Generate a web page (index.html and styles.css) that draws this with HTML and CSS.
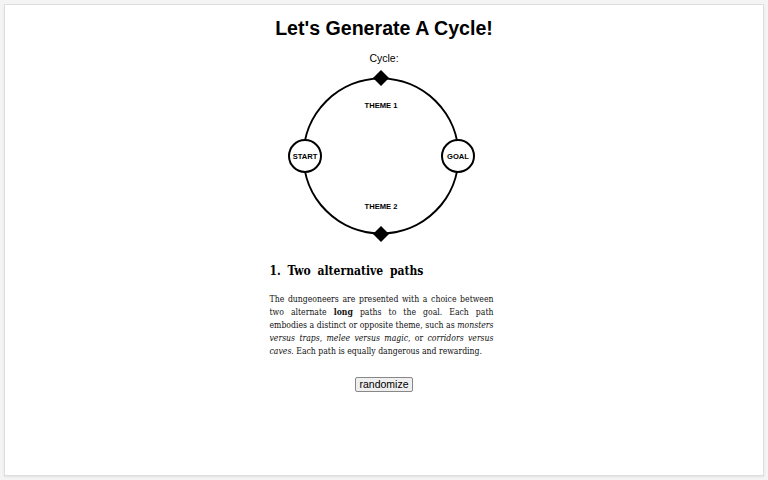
FILE: index.html
```html
<!DOCTYPE html>
<html>
<head>
<meta charset="utf-8">
<link rel="stylesheet" href="styles.css">
</head>
<body>
<div class="card">
  <h1 class="title">Let's Generate A Cycle!</h1>
  <div class="label">Cycle:</div>
  <svg class="diagram" width="200" height="180" viewBox="0 0 200 180">
    <circle cx="97" cy="88" r="77.5" fill="none" stroke="#000" stroke-width="2"/>
    <polygon points="97,80 105,88 97,96 89,88" fill="#000" transform="translate(0,-78)"/>
    <polygon points="97,80 105,88 97,96 89,88" fill="#000" transform="translate(0,78)"/>
    <circle cx="21" cy="88" r="16" fill="#fff" stroke="#000" stroke-width="2"/>
    <circle cx="174" cy="88" r="16" fill="#fff" stroke="#000" stroke-width="2"/>
    <text x="21" y="91" class="node">START</text>
    <text x="174" y="91" class="node">GOAL</text>
    <text x="97" y="40" class="node">THEME 1</text>
    <text x="97" y="141" class="node">THEME 2</text>
  </svg>
  <div class="section">
    <h2 class="heading">1. Two alternative paths</h2>
    <p class="body">The dungeoneers are presented with a choice between two alternate <b>long</b> paths to the goal. Each path embodies a distinct or opposite theme, such as <i>monsters versus traps</i>, <i>melee versus magic</i>, or <i>corridors versus caves</i>. Each path is equally dangerous and rewarding.</p>
  </div>
  <div class="actions"><button class="btn">randomize</button></div>
</div>
</body>
</html>
```
FILE: styles.css
```css
html, body { margin: 0; padding: 0; }
body {
  background: #f4f4f4;
  padding: 4px;
  font-family: "Liberation Sans", Arial, sans-serif;
}
.card {
  background: #fff;
  border: 1px solid #dedede;
  box-shadow: 0 1px 2px rgba(0,0,0,0.08);
  height: 472px;
  box-sizing: border-box;
  padding-top: 12px;
  display: flex;
  flex-direction: column;
  align-items: center;
}
.title {
  margin: 0;
  font-size: 19.6px;
  line-height: 22px;
  font-weight: bold;
  color: #000;
}
.label {
  margin-top: 13px;
  font-size: 10.5px;
  line-height: 13px;
  color: #000;
}
.diagram {
  display: block;
  margin-top: 3px;
}
.node {
  font-family: "Liberation Sans", Arial, sans-serif;
  font-size: 7.6px;
  font-weight: bold;
  text-anchor: middle;
  fill: #000;
}
.section {
  width: 224px;
  margin-top: 15px;
  margin-left: -5px;
  font-family: "DejaVu Serif Condensed", "DejaVu Serif", serif;
}
.heading {
  margin: 0;
  font-size: 12px;
  line-height: 16px;
  font-weight: bold;
  word-spacing: 3px;
}
.body {
  margin: 14px 0 0 0;
  font-size: 8.6px;
  line-height: 13px;
  text-align: justify;
  color: #111;
}
.actions {
  margin-top: 16px;
}
.btn {
  font-family: "Liberation Sans", Arial, sans-serif;
  font-size: 10.5px;
  padding: 0 3px;
  height: 15px;
  line-height: 13px;
  border: 1px solid #888;
  border-radius: 2px;
  background: #efefef;
  color: #000;
}
```
